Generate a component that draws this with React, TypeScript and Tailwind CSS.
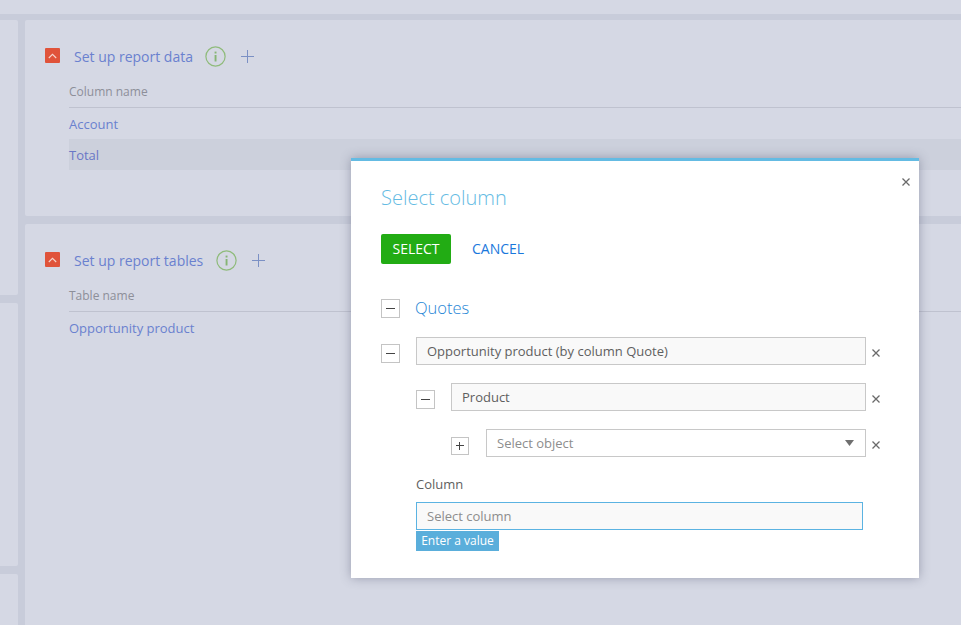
import React from "react";

function SectionHeader({ title, titleW }: { title: string; titleW: string }) {
  return (
    <div className="flex items-center h-[24px]">
      <div className="-mt-[3px] w-[15px] h-[15px] bg-[#e0533a] rounded-[1px] flex items-center justify-center">
        <svg width="9" height="6" viewBox="0 0 9 6" fill="none" stroke="#f6d5cd" strokeWidth="1.1">
          <path d="M0.8 5 L4.5 1.3 L8.2 5" />
        </svg>
      </div>
      <span className={`ml-[14px] text-[14px] leading-[20px] text-[#6a81cf] whitespace-nowrap ${titleW}`}>{title}</span>
      <svg className="-mt-[2px] ml-[14px]" width="21" height="21" viewBox="0 0 21 21" fill="none">
        <circle cx="10.5" cy="10.5" r="9.6" stroke="#8fbb7b" strokeWidth="1.2" />
        <rect x="9.6" y="9" width="1.9" height="6.5" fill="#86b574" />
        <rect x="9.6" y="5.6" width="1.9" height="1.9" fill="#86b574" />
      </svg>
      <svg className="-mt-[2px] ml-[15px]" width="13" height="13" viewBox="0 0 13 13" stroke="#7b90c4" strokeWidth="1">
        <path d="M0 6.5 H13 M6.5 0 V13" />
      </svg>
    </div>
  );
}

function Toggle({ sign }: { sign: "-" | "+" }) {
  return (
    <div
      className={`border border-[#c4c4c4] bg-white flex items-center justify-center shrink-0 ${
        sign === "-" ? "w-[19px] h-[19px]" : "w-[18px] h-[18px]"
      }`}
    >
      {sign === "-" ? (
        <svg width="9" height="9" viewBox="0 0 9 9" stroke="#444444" strokeWidth="1">
          <path d="M0 4.5 H9" />
        </svg>
      ) : (
        <svg width="8" height="8" viewBox="0 0 8 8" stroke="#444444" strokeWidth="1">
          <path d="M0 3.5 H8 M3.5 0 V8" />
        </svg>
      )}
    </div>
  );
}

function Cross() {
  return (
    <svg className="shrink-0" width="8" height="8" viewBox="0 0 8 8" stroke="#6a6a6a" strokeWidth="1.3">
      <path d="M0.5 0.5 L7.5 7.5 M7.5 0.5 L0.5 7.5" />
    </svg>
  );
}

function TreeRow({
  indent,
  sign,
  text,
  placeholder,
  select,
}: {
  indent: string;
  sign: "-" | "+";
  text: string;
  placeholder?: boolean;
  select?: boolean;
}) {
  return (
    <div className={`flex items-center h-[28px] ${indent}`}>
      <div className={sign === "-" ? "mt-[5px] mr-[16px]" : "mt-[6px] mr-[17px]"}>
        <Toggle sign={sign} />
      </div>
      <div
        className={`flex-1 h-[28px] border border-[#c8c8c8] pl-[10px] pr-[11px] flex items-center justify-between text-[13px] ${
          select ? "bg-white" : "bg-[#f9f9f9]"
        } ${placeholder ? "text-[#8d8d8d]" : "text-[#5f5f5f]"}`}
      >
        <span className="pt-[2px]">{text}</span>
        {select && (
          <svg width="9" height="6" viewBox="0 0 9 6" fill="#6f6f6f">
            <path d="M0 0 H9 L4.5 6 Z" />
          </svg>
        )}
      </div>
      <div className="ml-[6px] mt-[4px] flex">
        <Cross />
      </div>
    </div>
  );
}

export default function App() {
  return (
    <div
      className="relative w-[961px] h-[625px] overflow-hidden bg-[#c8ccda]"
      style={{ fontFamily: '"Open Sans", "Noto Sans", sans-serif' }}
    >
      <div className="h-[14px] bg-[#d5d8e4]" />
      <div className="mt-[6px] flex gap-[7px] h-[605px]">
        <div className="w-[18px] flex flex-col gap-[8px]">
          <div className="h-[275px] bg-[#d5d8e4] rounded-r-[2px]" />
          <div className="h-[263px] bg-[#d5d8e4] rounded-r-[2px]" />
          <div className="flex-1 bg-[#d5d8e4] rounded-tr-[2px]" />
        </div>
        <div className="flex-1 flex flex-col gap-[8px]">
          <div className="h-[196px] bg-[#d5d8e4] rounded-l-[2px] pl-[20px] pt-[25px]">
            <SectionHeader title="Set up report data" titleW="w-[117px]" />
            <div className="ml-[24px] mt-[12px]">
              <div className="h-[27px] pt-[2px] border-b border-[#bfc2cf] text-[12px] leading-[17px] text-[#8d8f99]">Column name</div>
              <div className="h-[31px] pt-[2px] flex items-center text-[13px] text-[#6a81cf]">Account</div>
              <div className="h-[31px] pt-[2px] flex items-center text-[13px] text-[#6a77c6] bg-[#ccd0dc]">Total</div>
            </div>
          </div>
          <div className="flex-1 bg-[#d5d8e4] rounded-tl-[2px] pl-[20px] pt-[25px]">
            <SectionHeader title="Set up report tables" titleW="w-[128px]" />
            <div className="ml-[24px] mt-[12px]">
              <div className="h-[27px] pt-[2px] border-b border-[#bfc2cf] text-[12px] leading-[17px] text-[#8d8f99]">Table name</div>
              <div className="h-[31px] pt-[2px] flex items-center text-[13px] text-[#6a81cf]">Opportunity product</div>
            </div>
          </div>
        </div>
      </div>

      <div className="absolute left-[351px] top-[158px] w-[568px] h-[420px] bg-white border-t-[3px] border-[#64bbe3] shadow-[0_0_10px_rgba(80,85,110,0.45)] pl-[30px] pr-[39px]">
        <div className="absolute right-[9px] top-[17px]">
          <Cross />
        </div>
        <div className="pt-[22px] text-[20px] leading-[30px] font-light text-[#64bbe3]">Select column</div>
        <div className="mt-[21px] flex items-center">
          <div className="w-[70px] h-[30px] pb-[2px] rounded-[2px] bg-[#22ac14] text-white text-[14px] flex items-center justify-center">
            SELECT
          </div>
          <div className="ml-[21px] pb-[2px] text-[14px] text-[#1a78dc]">CANCEL</div>
        </div>
        <div className="mt-[32px] flex items-center h-[24px]">
          <Toggle sign="-" />
          <span className="ml-[15px] text-[16.5px] font-light text-[#1f86d6]">Quotes</span>
        </div>
        <div className="mt-[17px] flex flex-col gap-[18px]">
          <TreeRow indent="" sign="-" text="Opportunity product (by column Quote)" />
          <TreeRow indent="pl-[35px]" sign="-" text="Product" />
          <TreeRow indent="pl-[70px]" sign="+" text="Select object" placeholder select />
        </div>
        <div className="ml-[35px] mt-[17px] text-[13px] leading-[20px] text-[#5f5f5f]">Column</div>
        <div className="ml-[35px] mt-[8px] w-[447px] h-[28px] border border-[#5bb3e2] bg-[#f9f9f9] pl-[10px] pt-[2px] flex items-center text-[13px] text-[#8d8d8d]">
          Select column
        </div>
        <div className="ml-[35px] mt-px w-[83px] h-[20px] bg-[#5aaedb] text-white text-[12px] flex items-center justify-center">
          Enter a value
        </div>
      </div>
    </div>
  );
}
